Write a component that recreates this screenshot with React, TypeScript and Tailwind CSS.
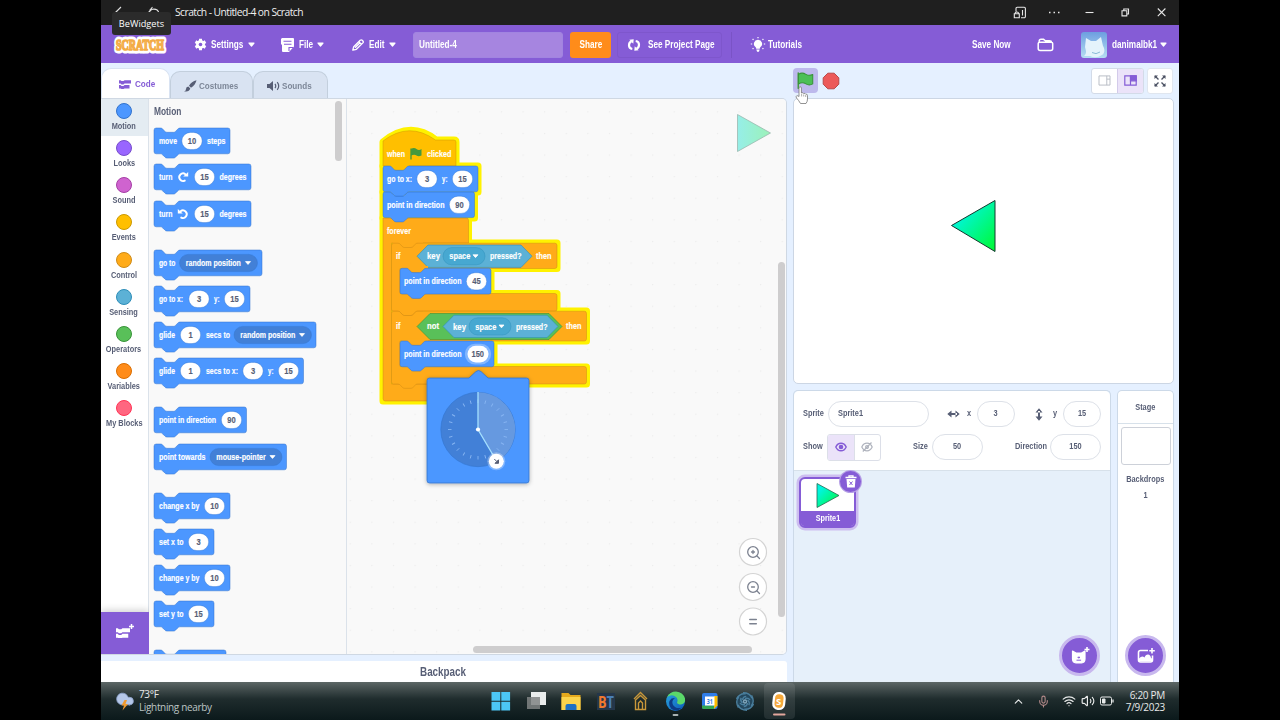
import type { ReactNode } from 'react'
import { ChevronUp, Cloud, Mic, Volume2, Wifi } from 'lucide-react'

type Part =
  | { kind: 'text'; x: number; w: number; s: string }
  | { kind: 'num'; x: number; s: string }
  | { kind: 'menu'; x: number; w: number; s: string; tw: number }
  | { kind: 'cw' | 'ccw'; x: number }

const text = (x: number, w: number, s: string): Part => ({ kind: 'text', x, w, s })
const num = (x: number, s: string): Part => ({ kind: 'num', x, s })
const menu = (x: number, w: number, s: string, tw: number): Part => ({ kind: 'menu', x, w, s, tw })

const categories = [
  { name: 'Motion', color: '#4c97ff', edge: '#3373cc' },
  { name: 'Looks', color: '#9966ff', edge: '#774dcb' },
  { name: 'Sound', color: '#cf63cf', edge: '#a63fa6' },
  { name: 'Events', color: '#ffbf00', edge: '#cc9900' },
  { name: 'Control', color: '#ffab19', edge: '#cf8b17' },
  { name: 'Sensing', color: '#5cb1d6', edge: '#2e8eb8' },
  { name: 'Operators', color: '#59c059', edge: '#389438' },
  { name: 'Variables', color: '#ff8c1a', edge: '#db6e00' },
  { name: 'My Blocks', color: '#ff6680', edge: '#ff3355' },
]

const palette: { w: number; gap?: boolean; parts: Part[] }[] = [
  { w: 76, parts: [text(5, 18, 'move'), num(38, '10'), text(53, 18.5, 'steps')] },
  { w: 97, parts: [text(5, 13.5, 'turn'), { kind: 'cw', x: 29 }, num(50.5, '15'), text(65.5, 27, 'degrees')] },
  { w: 97, parts: [text(5, 13.5, 'turn'), { kind: 'ccw', x: 29 }, num(50.5, '15'), text(65.5, 27, 'degrees')] },
  { w: 108, gap: true, parts: [text(5, 16.5, 'go to'), menu(25.5, 78, 'random position', 55)] },
  { w: 96, parts: [text(5, 24, 'go to x:'), num(45, '3'), text(60, 5.5, 'y:'), num(80.5, '15')] },
  { w: 162, parts: [text(5, 16, 'glide'), num(36.5, '1'), text(52, 24, 'secs to'), menu(80, 77.5, 'random position', 55)] },
  { w: 149.5, parts: [text(5, 16, 'glide'), num(36.5, '1'), text(52, 32, 'secs to x:'), num(99, '3'), text(114, 5.5, 'y:'), num(134.5, '15')] },
  { w: 92.5, gap: true, parts: [text(5, 57, 'point in direction'), num(77.5, '90')] },
  { w: 132.5, parts: [text(5, 46.5, 'point towards'), menu(56, 72, 'mouse-pointer', 49.5)] },
  { w: 76, gap: true, parts: [text(5, 40.5, 'change x by'), num(60.5, '10')] },
  { w: 60, parts: [text(5, 24.5, 'set x to'), num(44.5, '3')] },
  { w: 76, parts: [text(5, 40.5, 'change y by'), num(60.5, '10')] },
  { w: 60, parts: [text(5, 24.5, 'set y to'), num(44.5, '15')] },
  { w: 72, gap: true, parts: [] },
]

const NOTCH = 'h4.3c1.1 0 1.6.5 2.2 1.1l2.1 2.1c.6.6 1.1 1.1 2.2 1.1h6.5c1.1 0 1.6-.5 2.2-1.1l2.1-2.1c.6-.6 1.1-1.1 2.2-1.1'
const TAB = 'c-1.1 0-1.6.5-2.2 1.1l-2.1 2.1c-.6.6-1.1 1.1-2.2 1.1h-6.5c-1.1 0-1.6-.5-2.2-1.1l-2.1-2.1c-.6-.6-1.1-1.1-2.2-1.1h-4.3'

const stackPath = (w: number, h = 25.8) =>
  `M0 2.2a2.2 2.2 0 0 1 2.2-2.2${NOTCH}H${w - 2.2}a2.2 2.2 0 0 1 2.2 2.2V${h - 2.2}a2.2 2.2 0 0 1-2.2 2.2H26${TAB}a2.2 2.2 0 0 1-2.2-2.2z`

function Label({ x, y = 13, w, s, fill = '#fff' }: { x: number; y?: number; w: number; s: string; fill?: string }) {
  return (
    <text
      transform={`translate(${x} ${y + 3.1}) scale(.8 1)`}
      textLength={w / 0.8}
      lengthAdjust="spacingAndGlyphs"
      fill={fill}
      stroke={fill}
      strokeWidth=".15"
      fontSize="8.9"
      fontWeight="700"
    >
      {s}
    </text>
  )
}

// condensed label; w reserves the width it takes in a row
function Narrow({ children, w, className = '' }: { children: ReactNode; w?: number; className?: string }) {
  return (
    <span className={`flex shrink-0 ${w ? '' : 'justify-center'} ${className}`} style={{ width: w }}>
      <span className={`inline-block scale-x-[0.82] whitespace-nowrap ${w ? 'origin-left' : 'origin-center'}`}>{children}</span>
    </span>
  )
}

function Parts({ parts, menuFill = '#4280d7', menuEdge = '#3373cc' }: { parts: Part[]; menuFill?: string; menuEdge?: string }) {
  return (
    <>
      {parts.map((p, i) => {
        if (p.kind === 'text') return <Label key={i} x={p.x} w={p.w} s={p.s} />
        if (p.kind === 'num') {
          const tw = p.s.length * 4.2
          return (
            <g key={i}>
              <rect x={p.x - 10.2} y="4.4" width="20.4" height="17.2" rx="8.6" fill="#fff" stroke="#3373cc" strokeWidth=".4" />
              <Label x={p.x - tw / 2} w={tw} s={p.s} fill="#575e75" />
            </g>
          )
        }
        if (p.kind === 'menu') {
          return (
            <g key={i}>
              <rect x={p.x} y="4.4" width={p.w} height="17.2" rx="8.6" fill={menuFill} stroke={menuEdge} strokeWidth=".4" />
              <Label x={p.x + 6.3} w={p.tw} s={p.s} />
              <path d={`M${p.x + p.w - 12} 11.6h5l-2.5 2.8z`} fill="#fff" stroke="#fff" strokeWidth=".8" strokeLinejoin="round" />
            </g>
          )
        }
        return (
          <g key={i} transform={`translate(${p.x} 13)${p.kind === 'ccw' ? ' scale(-1 1)' : ''}`}>
            <path d="M1.8 3.6A3.8 3.8 0 1 1 2.4-2.8" fill="none" stroke="#fff" strokeWidth="1.9" strokeLinecap="round" />
            <path d="M5.2-5v4.6H.2z" fill="#fff" />
          </g>
        )
      })}
    </>
  )
}

function Motion({ x, y, w, parts }: { x: number; y: number; w: number; parts: Part[] }) {
  return (
    <g transform={`translate(${x} ${y})`}>
      <path d={stackPath(w)} fill="#4c97ff" stroke="#3373cc" strokeWidth=".5" />
      <Parts parts={parts} />
    </g>
  )
}

function Flag({ size }: { size: number }) {
  return (
    <svg width={size} height={size} viewBox="0 0 16 16">
      <path d="M1.2 1v14.4" stroke="#45993d" strokeWidth="1.4" strokeLinecap="round" />
      <path d="M1.4 2.2c2.6-1.8 5-1.2 7 0 2.2 1.3 4.2 1.2 6.4.1v8.9c-2.2 1.2-4.3 1.2-6.4 0-2-1.2-4.4-1.5-7 .1z" fill="#4cbf56" stroke="#389438" strokeWidth="1" strokeLinejoin="round" />
    </svg>
  )
}

function Caret({ className = '' }: { className?: string }) {
  return (
    <svg className={`shrink-0 ${className}`} width="7" height="5" viewBox="0 0 7 5">
      <path d="M1 1h5L3.5 4z" fill="#fff" stroke="#fff" strokeWidth="1.2" strokeLinejoin="round" />
    </svg>
  )
}

function BlocksIcon({ color, size = 12 }: { color: string; size?: number }) {
  return (
    <svg width={size} height={size * 0.75} viewBox="0 0 12 9" fill={color}>
      <path d="M0 .2h1.5l1 .9h2l1-.9H12v3.400H5.500l-1 .9h-2l-1-.9H0z" />
      <path d="M0 5h1.500l1 .9h2l1-.9h5v3.400h-5l-1 .6h-2l-1-.6H0z" />
    </svg>
  )
}

function TitleBar() {
  return (
    <div className="flex h-[25px] shrink-0 items-center bg-[#1f1f1f] pl-[12px] text-white">
      <svg width="50" height="12" viewBox="0 0 50 12" className="-mt-[3px]" fill="none" stroke="#ddd" strokeWidth="1.1">
        <path d="M8 2 2 8M35 8l4-4M36.500 5.500l3-3.500M38 4.500c4-1 7 0 8 3.500" />
      </svg>
      <span className="ml-[12px] w-[136px] whitespace-nowrap font-['Open_Sans','Noto_Sans',sans-serif] text-[10.3px] leading-none tracking-[-0.55px] text-[#f0f0f0]">
        Scratch - Untitled-4 on Scratch
      </span>
      <svg className="ml-auto mr-[11px]" width="156" height="13" viewBox="0 0 156 13" fill="none" stroke="#e8e8e8" strokeWidth="1.1">
        <path d="M4 5.500V2.500a1.200 1.200 0 0 1 1.200-1.200h7a1.200 1.200 0 0 1 1.200 1.200v8a1.200 1.200 0 0 1-1.200 1.200H9M10.500 4v5.500M3 7.500q0-1.500 1.800-1.500t1.800 1.500M2.300 7.700h5v4h-5z" />
        <path d="M37 6.500h1.500M41.500 6.500h1.500M46 6.500h1.500" strokeWidth="1.6" />
        <path d="M73.500 6.500h8" />
        <path d="M110 4.700h4.800v5.200H110zM111.800 4.500V3h4.700v5h-1.500" />
        <path d="m145.800 2.500 7.600 7.600M153.400 2.500l-7.600 7.600" />
      </svg>
    </div>
  )
}

function MenuBar() {
  return (
    <div className="flex h-[38px] shrink-0 items-center whitespace-nowrap bg-[#855cd6] pt-px text-[10px] font-bold text-white">
      <svg className="ml-[11px] shrink-0 overflow-visible" width="56" height="24" viewBox="0 0 56 24">
        <g fontFamily="'Liberation Serif', serif" fontSize="14.500" fontWeight="700" strokeLinejoin="round">
          <text x="4" y="16.500" textLength="48" lengthAdjust="spacingAndGlyphs" fill="#fff" stroke="#fff" strokeWidth="7">SCRATCH</text>
          <text x="4" y="16.500" textLength="48" lengthAdjust="spacingAndGlyphs" fill="#f9c373" stroke="#f3ab45" strokeWidth="1.600">SCRATCH</text>
        </g>
      </svg>
      <svg className="ml-[26px] shrink-0" width="13" height="13" viewBox="0 0 13 13">
        <path d="M6.500.700v11.600M1.500 3.600l10 5.800M11.500 3.600l-10 5.800" stroke="#fff" strokeWidth="3" />
        <circle cx="6.500" cy="6.500" r="4.400" fill="#fff" />
        <circle cx="6.500" cy="6.500" r="1.800" fill="#855cd6" />
      </svg>
      <Narrow w={36} className="ml-[4px]">Settings</Narrow>
      <Caret className="ml-[1px]" />
      <svg className="ml-[26px] shrink-0" width="13" height="14" viewBox="0 0 13 14">
        <path d="M1 0h11q1 0 1 1v7.500L8 14H2q-1 0-1-1V7L0 6V1z" fill="#fff" />
        <path d="M2.500 3.300h8M3 6.300h7.500M8 13V9.500h4" stroke="#855cd6" fill="none" strokeWidth="1.100" />
      </svg>
      <Narrow w={18} className="ml-[5px]">File</Narrow>
      <Caret />
      <svg className="ml-[28px] shrink-0" width="12" height="12" viewBox="0 0 12 12" fill="none" stroke="#fff" strokeWidth="1.300" strokeLinejoin="round">
        <path d="m.800 11.200.9-3.500L8.200 1.200q1.200-.8 2 0l.7.8q.8 1 0 1.900L4.400 10.300zM6.800 2.800l2.500 2.500M3 8.800l4.500-4.500" />
      </svg>
      <Narrow w={20} className="ml-[5px]">Edit</Narrow>
      <Caret />
      <div className="ml-[17px] flex h-[26px] w-[150px] items-center rounded-[3px] border border-[#a184e0] bg-[#a685e0] pl-[5px]">
        <Narrow w={60}>Untitled-4</Narrow>
      </div>
      <div className="ml-[7px] flex h-[26px] w-[41px] items-center justify-center rounded-[3px] bg-[#ff8c1a]">
        <Narrow>Share</Narrow>
      </div>
      <div className="ml-[6px] flex h-[26px] w-[105px] items-center rounded-[3px] border border-[#7e56cc] pl-[9px]">
        <svg className="shrink-0" width="14" height="12" viewBox="0 0 14 12" fill="none" stroke="#fff" strokeWidth="2.200">
          <path d="M5.300 10Q2 9.500 2 6.300T4.500 2.500M8.700 2Q12 2.500 12 5.700T9.500 9.500" />
          <path d="M2.300.700 6.700.300 6.300 4.700zM11.700 11.300l-4.400.400.400-4.400z" fill="#fff" stroke="none" />
        </svg>
        <Narrow w={66} className="ml-[7px]">See Project Page</Narrow>
      </div>
      <div className="ml-[9px] h-[26px] w-px bg-[#7a53c6]" />
      <svg className="ml-[18px] shrink-0" width="16" height="16" viewBox="0 0 16 16">
        <path d="M8 2.800a4 4 0 0 1 2.500 7.200c-.6.6-.6 1-.7 1.700H6.200c-.1-.7-.1-1.100-.7-1.700A4 4 0 0 1 8 2.800zM6.300 12.600h3.400l-.8 2.200H7.100z" fill="#fff" />
        <path d="M8 0v1.200M2.600 2l.9.900M13.400 2l-.9.900M.800 7h1.400M13.800 7h1.400M2.600 12l.9-.900M13.400 12l-.9-.900" stroke="#fff" strokeWidth="1.200" />
      </svg>
      <Narrow w={40} className="ml-[2px]">Tutorials</Narrow>
      <Narrow w={38} className="ml-auto">Save Now</Narrow>
      <svg className="ml-[27px] shrink-0" width="17" height="14" viewBox="0 0 17 14" fill="none" stroke="#fff" strokeWidth="1.500">
        <path d="M1.200 5.500v5q0 2 2 2h10.500q2 0 2-2v-5q0-1.300-1.500-1.300h-11.500q-1.500 0-1.500 1.300zM2.200 4V3q0-1.700 1.800-1.700h2.500l2 1.500h4q2 0 2 1.200" />
      </svg>
      <svg className="ml-[27px] shrink-0" width="26" height="26" viewBox="0 0 26 26">
        <defs>
          <linearGradient id="sky" x2="0" y2="1">
            <stop stopColor="#6d9ee0" />
            <stop offset="1" stopColor="#b6dff2" />
          </linearGradient>
        </defs>
        <rect width="26" height="26" rx="3" fill="url(#sky)" />
        <path d="M3 24c3-3 2-5 1-9l1-9 5 3h5l5-4 2 9c2 3 2 7-1 9q-6 4-12 1z" fill="#e4f3fb" />
        <path d="M11 20.500q4 2.500 8-.5" fill="none" stroke="#8cbcd8" />
      </svg>
      <Narrow w={48} className="ml-[5px]">danimalbk1</Narrow>
      <Caret className="mr-[12px]" />
    </div>
  )
}

function Tabs() {
  return (
    <div className="flex h-[35px] shrink-0 items-end text-[9.900px] font-bold text-[#7d8798]">
      <div className="flex h-[30px] w-[69px] items-center rounded-t-[10px] border border-b-0 border-[#d9e3f2] bg-white pl-[17px] pt-px text-[#855cd6]">
        <BlocksIcon color="#855cd6" />
        <Narrow w={24} className="ml-[4px]">Code</Narrow>
      </div>
      <div className="flex h-[27px] w-[83px] items-center rounded-t-[10px] border border-b-0 border-[#c3cfdd] bg-[#d9e3f2] pl-[13px] pt-[2px]">
        <svg width="13" height="12" viewBox="0 0 13 12" fill="#575e75">
          <path d="M12.500.300q-5 1-7.500 5.500l2 2Q11.500 5 12.500.300zM4.300 6.500q-2.300.3-2.300 2.500T0 11.200q5 1.200 6.300-2.700z" />
        </svg>
        <Narrow w={40} className="ml-[2px]">Costumes</Narrow>
      </div>
      <div className="flex h-[27px] w-[75px] items-center rounded-t-[10px] border border-b-0 border-[#c3cfdd] bg-[#d9e3f2] pl-[13px] pt-[2px]">
        <svg width="13" height="12" viewBox="0 0 13 12" fill="#575e75">
          <path d="M0 4h2.500L6 1v10L2.500 8H0z" />
          <path d="M8 3.800q1.500 2.200 0 4.400M10.200 2.200q3 3.800 0 7.600" stroke="#575e75" strokeWidth="1.200" fill="none" />
        </svg>
        <Narrow w={32} className="ml-[2px]">Sounds</Narrow>
      </div>
    </div>
  )
}

function CategoryMenu() {
  return (
    <div className="flex w-[48px] shrink-0 flex-col border-r border-[#dbe2ea] bg-white">
      {categories.map((c, i) => (
        <div key={c.name} className={`flex h-[37.150px] flex-col items-center pr-px pt-[4px] ${i === 0 ? 'bg-[#e4ecf2]' : ''}`}>
          <div className="size-[16px] shrink-0 rounded-full border" style={{ background: c.color, borderColor: c.edge }} />
          <Narrow className="mt-[2px] text-[9px] font-bold leading-[10px] text-[#575e75]">{c.name}</Narrow>
        </div>
      ))}
      <div className="-mr-px mt-auto flex h-[42px] items-center justify-center bg-[#855cd6] shadow-[0_-2px_7px_rgba(0,0,0,0.18)]">
        <div className="mt-[-4px] flex items-start">
          <div className="mt-[4px]">
            <BlocksIcon color="#fff" size={14} />
          </div>
          <svg className="-ml-px" width="5" height="5" viewBox="0 0 5 5" stroke="#fff" strokeWidth="1.500">
            <path d="M2.500 0v5M0 2.500h5" />
          </svg>
        </div>
      </div>
    </div>
  )
}

function Palette() {
  return (
    <div className="relative w-[198px] shrink-0 overflow-hidden border-r border-[#dbe2ea] bg-[#f9f9f9] pl-[5px]">
      <div className="h-[29px] pt-[6px] text-[10.200px] font-bold leading-[13px] text-[#575e75]">
        <Narrow w={60}>Motion</Narrow>
      </div>
      {palette.map((b, i) => (
        <svg key={i} className={`block overflow-visible ${b.gap ? 'mt-[12.800px]' : ''}`} width={b.w} height="36.25" viewBox={`0 0 ${b.w} 36.25`}>
          <path d={stackPath(b.w)} fill="#4c97ff" stroke="#3373cc" strokeWidth=".5" />
          <Parts parts={b.parts} />
        </svg>
      ))}
      <div className="absolute right-[4px] top-[2px] h-[60px] w-[7px] rounded-full bg-[#cecdce]" />
    </div>
  )
}

const glowShapes = [
  'M383 142q27-22 53-2h18q2 0 2 2v24h-73z',
  'M383 166h95v26h-95z',
  'M383 192h91.500v26H383z',
  'M383 218h85.500v25H557v25.500h-66V293.500h66V311h29.500v30H494v26h92.500v17H468.500v17H383z',
]

function Sensing({ x, y }: { x: number; y: number }) {
  return (
    <g transform={`translate(${x} ${y})`}>
      <path d="m0 12.200 11-11.200h93l11 11.200-11 11.200H11z" fill="#5cb1d6" stroke="#2e8eb8" strokeWidth=".6" />
      <g transform="translate(0 -.8)">
        <Parts parts={[text(10, 13, 'key'), menu(26, 42, 'space', 21), text(73, 31.500, 'pressed?')]} menuFill="#47a8d1" menuEdge="#2e8eb8" />
      </g>
    </g>
  )
}

function AngleDial() {
  const ticks = Array.from({ length: 24 }, (_, i) => i * 15)
  return (
    <g>
      <g filter="url(#shadow)">
        <path d="M429.500 378H469l7-6.500q2.500-2 5 0l7 6.500h38.500q2.500 0 2.500 2.500V480.500q0 2.500-2.500 2.500h-97q-2.500 0-2.500-2.500V380.500q0-2.500 2.500-2.500z" fill="#4c97ff" stroke="#3373cc" strokeWidth=".8" />
      </g>
      <circle cx="478" cy="429.500" r="37.200" fill="#4280d7" stroke="#3373cc" strokeWidth=".6" />
      <path d="M478 429.500V392.300A37.200 37.200 0 0 1 496.600 461.700z" fill="#6699e0" />
      {ticks.map((a) => (
        <path key={a} d="M478 399.500v3.500" stroke="#86b4f2" strokeWidth=".9" transform={`rotate(${a} 478 429.500)`} />
      ))}
      <path d="M478 392v37.500l16.500 28" fill="none" stroke="#a5e0ff" strokeWidth="1.300" />
      <circle cx="478" cy="429.500" r="2.100" fill="#fff" />
      <circle cx="496.300" cy="461.300" r="9" fill="#fff" fillOpacity=".3" />
      <circle cx="496.300" cy="461.300" r="7.500" fill="#fff" />
      <path d="m494.300 459 2.500 2.500M498.500 459.800v3.500h-3.500z" fill="#575e75" stroke="#575e75" strokeWidth="1" strokeLinejoin="round" />
    </g>
  )
}

function Workspace() {
  return (
    <div className="relative flex-1 overflow-hidden bg-[#f9f9f9]">
      <svg className="-mt-px block" width="440" height="556" viewBox="347 98 440 556">
        <defs>
          <pattern id="dots" x="522.500" y="154.500" width="21.600" height="21.600" patternUnits="userSpaceOnUse">
            <rect width="1.200" height="1.200" fill="#ebebeb" />
          </pattern>
          <filter id="glow" x="-10%" y="-10%" width="120%" height="120%">
            <feGaussianBlur stdDeviation=".7" />
          </filter>
          <filter id="shadow" x="-20%" y="-20%" width="140%" height="140%">
            <feDropShadow dx="0" dy="1" stdDeviation="2" floodOpacity=".3" />
          </filter>
          <linearGradient id="ghost" x2="1" y2="0">
            <stop stopColor="#96eee8" />
            <stop offset="1" stopColor="#9cf2b8" />
          </linearGradient>
        </defs>
        <rect x="347" y="98" width="440" height="556" fill="url(#dots)" />
        <path d="M737.500 114.500 770.500 133 737.500 151.500z" fill="url(#ghost)" stroke="#9cb8b0" strokeWidth=".8" />

        <g fill="#fff200" stroke="#fff200" strokeWidth="7" strokeLinejoin="round" filter="url(#glow)">
          {glowShapes.map((d) => (
            <path key={d} d={d} />
          ))}
        </g>

        {/* forever */}
        <path d="M383 218h83.300q2.200 0 2.200 2.200V243h-77V384h77v14.800q0 2.200-2.200 2.200h-81q-2.200 0-2.200-2.200z" fill="#ffab19" stroke="#cf8b17" strokeWidth=".5" />
        <Label x={387} y={230.500} w={24} s="forever" />
        <path d="M393 241h30v8h-30zM393 308h30v8h-30z" fill="#ffab19" />

        {/* two if branches */}
        <path d={`M391.500 245.400q0-2.200 2.200-2.200${NOTCH}H554.800q2.200 0 2.200 2.200V266.300q0 2.200-2.200 2.200H400V293.500H554.800q2.200 0 2.200 2.200V309q0 2.200-2.200 2.200H417.500${TAB}q-2.200 0-2.200-2.200z`} fill="#ffab19" stroke="#cf8b17" strokeWidth=".5" />
        <Label x={396} y={256} w={4.500} s="if" />
        <Sensing x={417} y={244} />
        <Label x={536} y={256} w={15.500} s="then" />
        <path d={`M391.500 313.400q0-2.200 2.200-2.200${NOTCH}H584.300q2.200 0 2.200 2.200V338.800q0 2.200-2.200 2.200H400V366.500H584.300q2.200 0 2.200 2.200V381.800q0 2.200-2.200 2.200H417.500${TAB}q-2.200 0-2.200-2.200z`} fill="#ffab19" stroke="#cf8b17" strokeWidth=".5" />
        <Label x={396} y={326.200} w={4.500} s="if" />
        <path d="m417 326.500 13-13h119l13 13-13 13H430z" fill="#59c059" stroke="#389438" strokeWidth=".6" />
        <Label x={427} y={326.200} w={12} s="not" />
        <Sensing x={443} y={314.200} />
        <Label x={566} y={326.200} w={15.500} s="then" />
        <path d="M402 266h26v8h-26zM402 338.800h26v8h-26z" fill="#ffab19" />

        {/* event hat and motion blocks */}
        <path d="M383 142.500V141q26-20 52.500-1h18.300q2.200 0 2.200 2.200V166H409v5H385v-5h-2z" fill="#ffbf00" stroke="#cc9900" strokeWidth=".5" />
        <Label x={387} y={154} w={18} s="when" />
        <g transform="translate(410 147.500)">
          <path d="M1 1v11" stroke="#389438" strokeWidth="1.200" />
          <path d="M1 1.500q3-2 5.500 0t5 0v6.500q-3 1.500-5 0T1 8z" fill="#45993d" />
        </g>
        <Label x={427} y={154} w={24.500} s="clicked" />
        <Motion x={400} y={341} w={94} parts={[text(4, 57.500, 'point in direction')]} />
        <rect x="464.800" y="343.800" width="26.400" height="20.600" rx="10.300" fill="#fff" fillOpacity=".3" />
        <rect x="467.500" y="345.800" width="21" height="16.600" rx="8.300" fill="#fff" />
        <Label x={471.500} y={354} w={12.500} s="150" fill="#575e75" />
        <Motion x={400} y={268.300} w={91} parts={[text(4, 57.500, 'point in direction'), num(76.500, '45')]} />
        <Motion x={383} y={191.800} w={91.500} parts={[text(4, 57.500, 'point in direction'), num(76.500, '90')]} />
        <Motion x={383} y={166} w={95} parts={[text(4, 25, 'go to x:'), num(44, '3'), text(59, 5.500, 'y:'), num(79.500, '15')]} />

        <AngleDial />

        <g fill="#fff" stroke="#d4d4d4" strokeWidth="1.200">
          <circle cx="753" cy="552" r="13.500" />
          <circle cx="753" cy="587" r="13.500" />
          <circle cx="753" cy="621.500" r="13.500" />
        </g>
        <g fill="none" stroke="#7c8290" strokeWidth="1.300" strokeLinecap="round">
          <circle cx="753" cy="552" r="5.300" />
          <path d="m757 556 2.500 2.500M751.500 552h3M753 550.500v3" />
          <circle cx="753" cy="587" r="5.300" />
          <path d="m757 591 2.500 2.500M751.500 587h3" />
          <path d="M749.800 619.500h6.500M749.800 623.800h6.500" strokeWidth="1.500" />
        </g>
      </svg>
      <div className="absolute right-[1px] top-[163px] h-[355px] w-[7px] rounded-full bg-[#cecdce]" />
      <div className="absolute bottom-px left-[126px] h-[7px] w-[279px] rounded-full bg-[#cecdce]" />
    </div>
  )
}

function Field({ w, children, left = false }: { w: number; children: ReactNode; left?: boolean }) {
  return (
    <div
      className={`flex h-[26px] shrink-0 items-center rounded-full border border-[#dde1e8] bg-white ${left ? 'pl-[9px]' : 'justify-center'}`}
      style={{ width: w }}
    >
      <Narrow w={left ? 40 : undefined}>{children}</Narrow>
    </div>
  )
}

function StageArea() {
  return (
    <>
      <div className="flex h-[35px] shrink-0 items-center">
        <div className="relative flex size-[25px] items-center justify-center rounded-[4px] bg-[#bdb9ec]">
          <Flag size={17} />
          <svg className="absolute left-[2px] top-[18px] z-10" width="14" height="19" viewBox="0 0 14 19">
            <path d="M4 10.500V2q0-1.200 1.200-1.200T6.400 2v5q1.800-.8 2.200.5 1.600-.5 2 .6 1.900-.2 1.900 1.400V13q0 2.500-1.500 4.500H5.500Q3.500 14 1.500 12q-1-1.500.2-2.200 1-.4 2.300.7z" fill="#fff" stroke="#777" strokeWidth=".8" />
            <path d="M6.600 8v2.500M8.700 8.500v2M10.700 9v2" stroke="#777" strokeWidth=".6" />
          </svg>
        </div>
        <svg className="ml-[4px]" width="18" height="18" viewBox="0 0 18 18">
          <path d="M5.800 1.200h6.400l4.600 4.600v6.400l-4.600 4.600H5.800l-4.600-4.600V5.800z" fill="#ec5959" stroke="#b84848" />
        </svg>
        <div className="ml-auto flex h-[26px] w-[53px] overflow-hidden rounded-[3px] border border-[#d3dbe8] bg-white">
          <div className="flex flex-1 items-center justify-center">
            <svg width="13" height="11" viewBox="0 0 14 12" fill="none" stroke="#b5b9c2">
              <path d="M1 1h12v10H1zM9.500 1v10M9.500 4.500H13" />
            </svg>
          </div>
          <div className="flex flex-1 items-center justify-center border-l border-[#d3cbea] bg-[#ebe3f9]">
            <svg width="13" height="11" viewBox="0 0 13 11" fill="none" stroke="#855cd6" strokeWidth="1.200">
              <path d="M.800.800h11.400v9.400H.800zM6.500 1v9" />
              <path d="M6.500.800h5.700v5H6.500z" fill="#855cd6" />
            </svg>
          </div>
        </div>
        <div className="ml-[3px] mr-px flex h-[26px] w-[26px] items-center justify-center rounded-[3px] border border-[#e0e6ef] bg-white">
          <svg width="12" height="12" viewBox="0 0 12 12" fill="#4b5163" stroke="#4b5163" strokeWidth="1.400">
            <path d="M1 1l3.500 3.500M11 1 7.500 4.500M1 11l3.500-3.500M11 11 7.500 7.500" />
            <path d="M.500.500h3.500L.500 4zM11.500.500H8L11.500 4zM.500 11.500h3.500L.500 8zM11.500 11.500H8L11.500 8z" stroke="none" />
          </svg>
        </div>
      </div>
      <div className="h-[286px] shrink-0 rounded-[5px] border border-[#ccd6e4] bg-white">
        <svg className="ml-[156px] mt-[100px]" width="48" height="56" viewBox="950 199 48 56">
          <defs>
            <linearGradient id="tri" x1="0" y1="0" x2="1" y2="1">
              <stop offset=".2" stopColor="#00f5e0" />
              <stop offset="1" stopColor="#00fa30" />
            </linearGradient>
          </defs>
          <path d="M951.500 225.500 995 200.500V251.500z" fill="url(#tri)" stroke="#13382e" strokeWidth="1" />
        </svg>
      </div>
    </>
  )
}

function SpritePanel() {
  return (
    <div className="flex w-[318px] shrink-0 flex-col rounded-t-[5px] border border-b-0 border-[#ccd9e8] bg-[#e6f0fa] text-[9px] font-bold text-[#575e75]">
      <div className="flex h-[80px] shrink-0 flex-col gap-[7px] rounded-t-[5px] border-b border-[#d7e1ea] bg-white pl-[9px] pt-[10px]">
        <div className="flex h-[26px] items-center">
          <Narrow w={25}>Sprite</Narrow>
          <Field w={101} left>Sprite1</Field>
          <svg className="ml-[18px]" width="13" height="8" viewBox="0 0 13 8" fill="#575e75">
            <path d="M3 3h7v2H3zM4.500.500v7L.300 4zM8.500.500v7L12.700 4z" />
          </svg>
          <Narrow w={10} className="ml-[7px]">x</Narrow>
          <Field w={38}>3</Field>
          <svg className="ml-[20px]" width="8" height="13" viewBox="0 0 8 13" fill="#575e75">
            <path d="M3 3h2v7H3zM.500 4.500h7L4 .300zM.500 8.500h7L4 12.700z" />
          </svg>
          <Narrow w={10} className="ml-[10px]">y</Narrow>
          <Field w={38}>15</Field>
        </div>
        <div className="flex h-[26px] items-center">
          <Narrow w={24}>Show</Narrow>
          <div className="flex h-[27px] w-[54px] overflow-hidden rounded-[3px] border border-[#dcdfe8]">
            <div className="flex flex-1 items-center justify-center bg-[#ebe3f9]">
              <svg width="12" height="10" viewBox="0 0 12 10" fill="none" stroke="#855cd6" strokeWidth="1.400">
                <path d="M.800 5Q2.500 1.200 6 1.200T11.200 5Q9.500 8.800 6 8.800T.800 5z" />
                <circle cx="6" cy="5" r="1.600" fill="#855cd6" />
              </svg>
            </div>
            <div className="flex flex-1 items-center justify-center border-l border-[#dcdfe8]">
              <svg width="12" height="10" viewBox="0 0 12 10" fill="none" stroke="#b0b4be" strokeWidth="1.200">
                <path d="M.800 5Q2.500 1.200 6 1.200T11.200 5Q9.500 8.800 6 8.800T.800 5zM1.800 9.500 10.500.500" />
                <circle cx="6" cy="5" r="1.400" />
              </svg>
            </div>
          </div>
          <Narrow w={19} className="ml-[32px]">Size</Narrow>
          <Field w={51}>50</Field>
          <Narrow w={35} className="ml-[32px]">Direction</Narrow>
          <Field w={51}>150</Field>
        </div>
      </div>
      <div className="relative ml-[5px] mt-[6px] flex h-[51px] w-[57px] flex-col overflow-visible rounded-[6px] border-2 border-[#855cd6] bg-white shadow-[0_0_0_2.5px_#cdbef0]">
        <div className="flex flex-1 items-center justify-center">
          <svg width="26" height="27" viewBox="0 0 26 27">
            <path d="M2 1.500 24 13.500 2 25.500z" fill="url(#tri)" stroke="#286650" strokeWidth=".8" />
          </svg>
        </div>
        <div className="flex h-[15px] items-center justify-center rounded-b-[3px] bg-[#855cd6] text-[8.800px] text-white">
          <Narrow>Sprite1</Narrow>
        </div>
        <div className="absolute -right-[7px] -top-[8px] flex size-[21px] items-center justify-center rounded-full bg-[#855cd6] shadow-[0_0_0_1px_#b7a1e6]">
          <svg width="12" height="13" viewBox="0 0 12 13">
            <path d="M.500 2.500h11M4 2V.800h4V2" fill="none" stroke="#fff" strokeWidth="1.300" />
            <path d="M1.500 4h9L9.800 12.500H2.200z" fill="#fff" />
            <path d="m4.500 6.500 3 3.500M7.500 6.500l-3 3.500" stroke="#855cd6" />
          </svg>
        </div>
      </div>
      <div className="mb-[6px] ml-auto mr-[10px] mt-auto flex size-[41px] items-center justify-center rounded-full border-[3px] border-[#c8b8ee] bg-[#855cd6]">
        <svg width="20" height="18" viewBox="0 0 20 18">
          <path d="M2.500 4 6 6h5.500L15 4V12q0 3.500-3.500 4h-5.500q-3.500-.5-3.500-4z" fill="#fff" stroke="#fff" strokeWidth="1.200" strokeLinejoin="round" />
          <path d="M7.800 10.200h2L8.800 11.200z" stroke="#855cd6" fill="#855cd6" />
          <path d="M6.500 13.200h4.600" stroke="#855cd6" />
          <path d="M17 0v5M14.500 2.500h5" stroke="#fff" strokeWidth="1.600" />
        </svg>
      </div>
    </div>
  )
}

function StageSelector() {
  return (
    <div className="ml-[6px] flex w-[57px] shrink-0 flex-col items-center rounded-t-[5px] border border-b-0 border-[#ccd9e8] bg-white text-[9px] font-bold text-[#575e75]">
      <div className="flex h-[33px] w-full items-center justify-center border-b border-[#d7e1ea] pt-px">
        <Narrow>Stage</Narrow>
      </div>
      <div className="mt-[3px] h-[38px] w-[50px] shrink-0 rounded-[3px] border border-[#cdd1d9]" />
      <Narrow className="mt-[8px] leading-[12px]">Backdrops</Narrow>
      <Narrow className="mt-[4px] leading-[12px]">1</Narrow>
      <div className="mb-[6px] mt-auto flex size-[41px] items-center justify-center rounded-full border-[3px] border-[#c8b8ee] bg-[#855cd6]">
        <svg width="18" height="16" viewBox="0 0 18 16">
          <path d="M11 2.500H3.500q-2 0-2 2V12q0 2 2 2h10q2 0 2-2V7.500" fill="none" stroke="#fff" strokeWidth="1.600" />
          <path d="M2 10.500q3-3.500 5.500-1 1-3 3.500-3t3 3.500l1 .5V13.500H2z" fill="#fff" />
          <path d="M15 0v5.500M12.300 2.700h5.500" stroke="#fff" strokeWidth="1.600" />
        </svg>
      </div>
    </div>
  )
}

function Taskbar() {
  return (
    <div className="flex h-[38px] shrink-0 items-center bg-linear-to-b from-[#5d6766] via-[#1f2c2d] via-45% to-[#0b191b] font-['Open_Sans','Noto_Sans',sans-serif] text-[#e8eaea]">
      <div className="relative ml-[14px] size-[20px]">
        <Cloud size={20} fill="#b5c7e8" stroke="#8fa5cf" strokeWidth={1} className="-mt-[2px]" />
        <svg className="absolute left-[5px] top-[9px]" width="9" height="11" viewBox="0 0 9 11">
          <path d="M4.500 0 1.500 5.500h2.500L2.500 10.500 8 4H5.500L7 0z" fill="#f19a2e" />
        </svg>
      </div>
      <div className="ml-[4px] w-[90px] whitespace-nowrap text-[10px] leading-[13px] tracking-[-0.350px]">
        <div>73°F</div>
        <div className="text-[#bcc4c4]">Lightning nearby</div>
      </div>
      <svg className="ml-[262px] shrink-0" width="306" height="38" viewBox="491 682 306 38">
        <defs>
          <linearGradient id="edge" x2="1" y2="1">
            <stop stopColor="#2aa7e0" />
            <stop offset="1" stopColor="#0c59b8" />
          </linearGradient>
        </defs>
        <path d="M491.500 692h8.800v8.800h-8.800zM501.300 692h8.800v8.800h-8.800zM491.500 701.800h8.800v8.800h-8.800zM501.300 701.800h8.800v8.800h-8.800z" fill="#4cc6f5" />
        <path d="M531 692h15v13h-15z" fill="#e9ecec" />
        <path d="M527 697h13v12h-13z" fill="#808484" fillOpacity=".85" />
        <path d="M561.500 693h7l2 2h10v15h-19z" fill="#e5a91c" />
        <path d="M561.500 697h19v13h-19z" fill="#fbd34c" />
        <path d="M565.500 710v-4q0-2 2-2h7q2 0 2 2v4z" fill="#1d70c4" />
        <rect x="597" y="693" width="18" height="17" fill="#24364a" />
        <text x="598" y="707.500" textLength="16" lengthAdjust="spacingAndGlyphs" fontSize="16.500" fontWeight="700" fill="#f0792f">
          B<tspan fill="#4a7fb5">T</tspan>
        </text>
        <path d="M634 699l6.500-6.500L647 699M635.500 700v9.500h10V700l-5-4.500zM638.500 709.500V703l2-2 2 2v6.500" fill="none" stroke="#c8973a" strokeWidth="1.400" />
        <circle cx="675.500" cy="701.500" r="9.500" fill="url(#edge)" />
        <path d="M667 697q3-5.500 9-5.500 7 .5 9 7 .8 5-4 6-3.500 0-4-2 1.500-3-1-5.500-4-3.500-9 0z" fill="#5bd86a" />
        <path d="M675 698q-4 2.500-2 7 3 4.500 9 2.500-5 5-10.500 1.500-5-6 0-10.500z" fill="#0d3b86" />
        <path d="M673.500 715h4" stroke="#a9b2b3" strokeWidth="1.800" strokeLinecap="round" />
        <rect x="702" y="693" width="15.500" height="16" rx="2" fill="#2f7de9" />
        <path d="M714 696h3.500v9.500L714 709z" fill="#fbbc04" />
        <path d="M702 705.500h12v3.500h-10q-2 0-2-1.500z" fill="#34a853" />
        <rect x="705" y="696.500" width="9.500" height="9" fill="#fff" />
        <text x="706.800" y="704" fontSize="7" fontWeight="700" fill="#2f7de9" textLength="6" lengthAdjust="spacingAndGlyphs">31</text>
        <circle cx="745" cy="701.500" r="8" fill="#24485e" />
        <g fill="none" stroke="#4a7f9e" strokeWidth="1.400">
          {[0, 60, 120, 180, 240, 300].map((a) => (
            <path key={a} d="M743 692.800q7 0 9 5.500M745 698.500q3.500-1 5 1.500" transform={`rotate(${a} 745 701.500)`} />
          ))}
          <circle cx="745" cy="701.500" r="1.500" stroke="#7fa5ba" />
        </g>
        <rect x="764" y="683" width="31" height="36" rx="4" fill="#fff" fillOpacity=".09" />
        <rect x="772.500" y="692" width="13" height="18" rx="6" fill="#fff" transform="rotate(6 779 701)" />
        <rect x="774.800" y="694.300" width="8.500" height="13.500" rx="4" fill="#f6a93b" transform="rotate(6 779 701)" />
        <text x="776" y="704.500" fontSize="9.500" fontWeight="700" fill="#fff">S</text>
        <path d="M774 714.500h10.500" stroke="#e3a79d" strokeWidth="2" strokeLinecap="round" />
      </svg>
      <div className="ml-auto flex items-center">
        <ChevronUp size={13} />
        <Mic size={13} className="ml-[12px] text-[#b58b8b]" />
        <Wifi size={14} className="ml-[12px]" />
        <Volume2 size={14} className="ml-[5px]" />
        <svg className="ml-[5px]" width="14" height="10" viewBox="0 0 14 10" fill="none" stroke="#e8eaea">
          <rect x=".500" y="1" width="11" height="8" rx="1.500" />
          <path d="M2.500 3h2.500v4H2.500z" fill="#e8eaea" />
          <path d="M13 3.500v3" strokeWidth="1.300" />
        </svg>
      </div>
      <div className="ml-[9px] mr-[14px] w-[42px] whitespace-nowrap text-right text-[10px] leading-[12.500px] tracking-[-0.300px]">
        <div>6:20 PM</div>
        <div>7/9/2023</div>
      </div>
    </div>
  )
}

export default function App() {
  return (
    <div className="flex h-[720px] w-[1280px] justify-center overflow-hidden bg-black font-['Liberation_Sans',sans-serif]">
      <div className="relative flex w-[1078px] flex-col">
        <TitleBar />
        <MenuBar />
        <div className="flex h-[619px] shrink-0 bg-[#e5f0ff]">
          <div className="flex w-[686px] shrink-0 flex-col">
            <Tabs />
            <div className="flex h-[557px] shrink-0 overflow-hidden rounded-r-[5px] border border-l-0 border-[#cfd8e3]">
              <CategoryMenu />
              <Palette />
              <Workspace />
            </div>
            <div className="mt-[6px] flex flex-1 items-center justify-center rounded-tr-[3px] bg-white pt-px text-[12px] font-bold text-[#575e75]">
              <Narrow className="-ml-px">Backpack</Narrow>
            </div>
          </div>
          <div className="ml-[6px] flex w-[381px] flex-col">
            <StageArea />
            <div className="mt-[6px] flex flex-1">
              <SpritePanel />
              <StageSelector />
            </div>
          </div>
        </div>
        <Taskbar />
        <div className="absolute left-[11px] top-[12px] flex h-[23px] w-[59px] items-center justify-center rounded-[3px] bg-[#2b2b2b] font-['Open_Sans','Noto_Sans',sans-serif] text-[9.200px] text-white">
          BeWidgets
        </div>
      </div>
    </div>
  )
}
